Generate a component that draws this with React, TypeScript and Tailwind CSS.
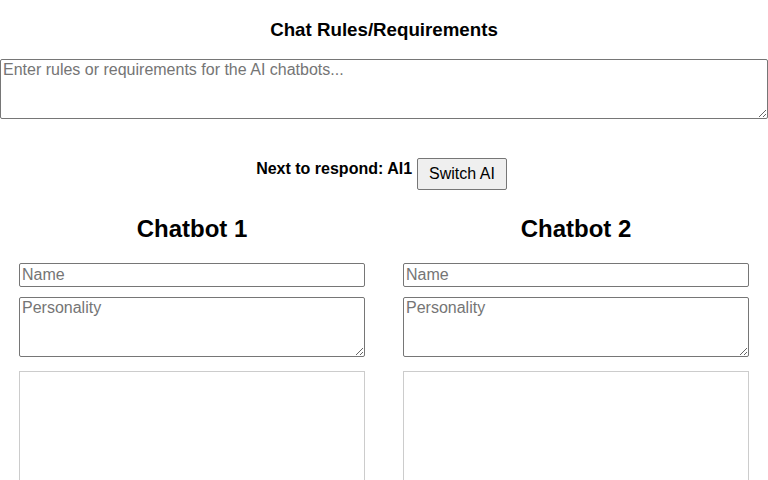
import React, { useState } from 'react';

interface ChatbotPanelProps {
  title: string;
}

const ChatbotPanel: React.FC<ChatbotPanelProps> = ({ title }) => {
  const [name, setName] = useState('');
  const [personality, setPersonality] = useState('');

  return (
    <div className="flex-1 px-[19px] flex flex-col">
      {/* Titulo */}
      <h2 className="text-center text-[24px] font-bold leading-[28px] mt-[25px] mb-[20px] text-black">
        {title}
      </h2>
      <input
        type="text"
        value={name}
        onChange={(e) => setName(e.target.value)}
        placeholder="Name"
        className="w-full h-[24px] px-[2px] border border-[#767676] rounded-[2px] text-[16px] leading-[18px] placeholder-[#757575] outline-none"
      />
      <textarea
        value={personality}
        onChange={(e) => setPersonality(e.target.value)}
        placeholder="Personality"
        className="w-full h-[60px] mt-[10px] px-[2px] py-[1px] border border-[#767676] rounded-[2px] text-[16px] leading-[18px] placeholder-[#757575] outline-none resize-y"
      />
      {/* Mensagens */}
      <div className="w-full h-[200px] mt-[14px] border border-[#cccccc]" />
    </div>
  );
};

export default function App() {
  const [rules, setRules] = useState('');
  const [nextAI, setNextAI] = useState<'AI1' | 'AI2'>('AI1');

  return (
    <div className="w-[768px] h-[480px] overflow-hidden bg-white text-black font-['Liberation_Sans',Arial,sans-serif]">
      <h3 className="text-center text-[18.72px] font-bold leading-[22px] pt-[19px] mb-[18px]">
        Chat Rules/Requirements
      </h3>
      <textarea
        value={rules}
        onChange={(e) => setRules(e.target.value)}
        placeholder="Enter rules or requirements for the AI chatbots..."
        className="block w-full h-[60px] px-[2px] py-[1px] border border-[#767676] rounded-[2px] text-[16px] leading-[18px] placeholder-[#757575] outline-none resize-y"
      />

      {/* Proximo a responder */}
      <div className="flex justify-center items-start gap-[5px] mt-[39px] pr-[5px]">
        <span className="text-[16px] font-bold leading-[20px] pt-[1px]">Next to respond: {nextAI}</span>
        <button
          onClick={() => setNextAI(nextAI === 'AI1' ? 'AI2' : 'AI1')}
          className="h-[32px] px-[11px] border border-[#767676] rounded-[2px] bg-[#efefef] text-[16px] leading-[18px]"
        >
          Switch AI
        </button>
      </div>

      <div className="flex">
        <ChatbotPanel title="Chatbot 1" />
        <ChatbotPanel title="Chatbot 2" />
      </div>
    </div>
  );
}
